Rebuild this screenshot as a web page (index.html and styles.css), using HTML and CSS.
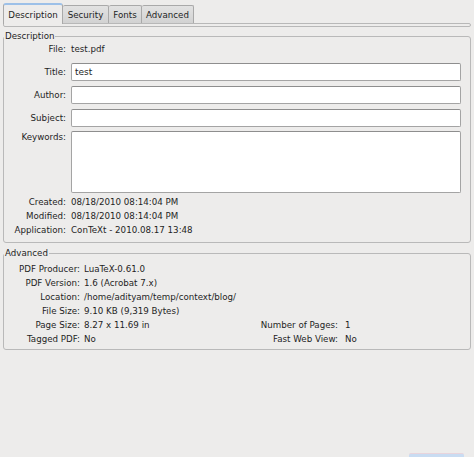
FILE: index.html
```html
<!DOCTYPE html>
<html>
<head>
<meta charset="utf-8">
<link rel="stylesheet" href="styles.css">
</head>
<body>
<div class="dialog">
  <div class="tabs">
    <div class="tab active t-desc">Description</div>
    <div class="tab t-sec">Security</div>
    <div class="tab t-fonts">Fonts</div>
    <div class="tab t-adv">Advanced</div>
  </div>
  <div class="pane"></div>

  <fieldset class="group desc">
    <legend>Description</legend>
    <div class="form">
      <label class="lbl r-file">File:</label><div class="val r-file">test.pdf</div>
      <label class="lbl r-title">Title:</label><div class="input r-title">test</div>
      <label class="lbl r-field">Author:</label><div class="input r-field"></div>
      <label class="lbl r-field">Subject:</label><div class="input r-field"></div>
      <label class="lbl r-kw">Keywords:</label><div class="input textarea r-kw"></div>
      <label class="lbl r-date">Created:</label><div class="val r-date">08/18/2010 08:14:04 PM</div>
      <label class="lbl">Modified:</label><div class="val">08/18/2010 08:14:04 PM</div>
      <label class="lbl">Application:</label><div class="val">ConTeXt - 2010.08.17 13:48</div>
    </div>
  </fieldset>

  <fieldset class="group adv">
    <legend>Advanced</legend>
    <div class="grid">
      <label class="lbl">PDF Producer:</label><div class="val wide">LuaTeX-0.61.0</div>
      <label class="lbl">PDF Version:</label><div class="val wide">1.6 (Acrobat 7.x)</div>
      <label class="lbl">Location:</label><div class="val wide">/home/adityam/temp/context/blog/</div>
      <label class="lbl">File Size:</label><div class="val wide">9.10 KB (9,319 Bytes)</div>
      <label class="lbl">Page Size:</label><div class="val">8.27 x 11.69 in</div>
      <label class="lbl">Number of Pages:</label><div class="val c4">1</div>
      <label class="lbl">Tagged PDF:</label><div class="val">No</div>
      <label class="lbl">Fast Web View:</label><div class="val c4">No</div>
    </div>
  </fieldset>

  <div class="buttons"><div class="button"></div></div>
</div>
</body>
</html>
```

FILE: styles.css
```css
html, body {
  margin: 0;
  padding: 0;
  background: #edeceb;
  width: 474px;
  height: 457px;
  overflow: hidden;
}
body {
  font-family: "DejaVu Sans", sans-serif;
  font-size: 8.7px;
  color: #1e1e1e;
}
.dialog {
  display: flex;
  flex-direction: column;
}
.tabs {
  display: flex;
  align-items: flex-end;
  padding: 3px 0 0 3px;
  height: 20px;
}
.tab {
  box-sizing: border-box;
  height: 18px;
  line-height: 19px;
  text-align: center;
  border: 1px solid #a9a9a9;
  border-bottom: none;
  border-left: none;
  border-radius: 2px 2px 0 0;
  background: linear-gradient(#e2e2e2, #d2d2d2);
  color: #1e1e1e;
}
.t-desc { width: 60px; }
.t-sec { width: 46px; }
.t-fonts { width: 33px; }
.t-adv { width: 52px; }
.tab.active {
  position: relative;
  z-index: 1;
  height: 21px;
  line-height: 20px;
  margin-bottom: -1px;
  border-left: 1px solid #a9a9a9;
  border-top: 2px solid #9cc0e8;
  border-radius: 3px 3px 0 0;
  background: #edeceb;
}
.pane {
  margin: 0 3px 0 3px;
  height: 2px;
  border: 1px solid #b8b8b8;
  border-radius: 0 3px 3px 3px;
}
.group {
  margin: 0 3px;
  padding: 0;
  border: 1px solid #b9b9b9;
  border-radius: 3px;
  min-width: 0;
}
.group legend {
  padding: 0 1px 0 1px;
  margin-left: 0;
  line-height: 10px;
  color: #1e1e1e;
}
.desc {
  margin-top: 4px;
}
.adv {
  margin-top: 5px;
}
.form {
  display: grid;
  grid-template-columns: 62px 1fr;
  column-gap: 5px;
  padding: 1px 9px 5px 0;
}
.lbl {
  text-align: right;
  white-space: nowrap;
  line-height: 14px;
}
.val {
  line-height: 14px;
  white-space: nowrap;
}
.r-title {
  margin-top: 7px;
}
.r-field {
  margin-top: 5px;
}
.r-kw {
  margin-top: 4px;
}
.input {
  height: 16px;
  border: 1px solid #a4a4a4;
  border-top-color: #8e8e8e;
  border-radius: 2px;
  background: #fff;
  padding: 0 3px;
  line-height: 17px;
  font-size: 9px;
}
.lbl.r-title, .lbl.r-field {
  line-height: 18px;
  height: 18px;
  border: none;
  background: none;
  padding: 0;
  font-size: 8.7px;
}
.lbl.r-kw {
  line-height: 12px;
}
.textarea {
  height: 60px;
}
.r-date {
  margin-top: 2px;
}
.grid {
  display: grid;
  grid-template-columns: 76px 156px 94px 1fr;
  column-gap: 4px;
  padding: 4px 0 3px 0;
}
.grid .wide {
  grid-column: 2 / 5;
}
.grid .c4 {
  padding-left: 3px;
}
.buttons {
  display: flex;
  justify-content: flex-end;
  margin-top: 103px;
  padding-right: 10px;
}
.button {
  width: 55px;
  height: 20px;
  border-top: 1px solid #e8d4dc;
  background: #c9dcf2;
  border-radius: 2px;
}
```
